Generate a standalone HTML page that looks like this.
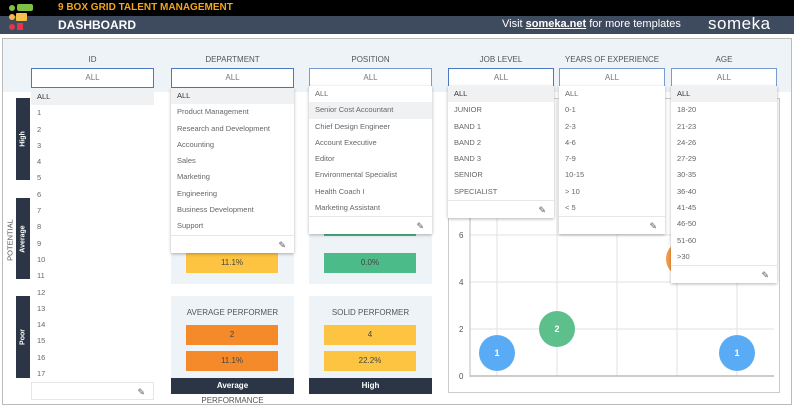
<!DOCTYPE html>
<html><head><meta charset="utf-8">
<style>
*{box-sizing:border-box;margin:0;padding:0}
body{width:794px;height:407px;overflow:hidden;background:#fff;font-family:"Liberation Sans",sans-serif;position:relative;color:#555}
.a{position:absolute}
.lbl{position:absolute;font-size:8px;color:#555;text-align:center;top:55px}
.inp{position:absolute;top:68px;height:20px;border:1.5px solid #4a78c2;background:#fff;font-size:8px;color:#777;text-align:center;line-height:17px}
.list{position:absolute;background:#fff;box-shadow:0 1px 3px rgba(0,0,0,.3);font-size:7.5px;color:#666}
.list div.r{height:16.3px;line-height:16.3px;padding-left:6px;white-space:nowrap}
.list div.r.h{background:#eff1f3;color:#333}
.list .ft{height:18px;border-top:1px solid #e6e6e6;position:relative}
.pen{position:absolute;right:8px;top:4px;font-size:9px;color:#555}
.side{position:absolute;left:16px;width:14px;background:#2c3545;color:#fff;font-size:7px;font-weight:bold}
.side span{position:absolute;left:50%;top:50%;transform:translate(-50%,-50%) rotate(-90deg);white-space:nowrap}
.bx{position:absolute;background:#eef3f7}
.bar{position:absolute;height:20px;font-size:8px;text-align:center;line-height:20px;color:#444}
.dk{position:absolute;background:#2c3545;color:#fff;font-size:8px;font-weight:bold;text-align:center;height:16px;line-height:16px}
</style></head><body>
<div class="a" style="left:0;top:0;width:794px;height:16px;background:#000"></div>
<div class="a" style="left:0;top:16px;width:794px;height:18px;background:#3e4b5e"></div>
<!-- logo -->
<div class="a" style="left:9px;top:5px;width:6px;height:6px;border-radius:50%;background:#7dc242"></div>
<div class="a" style="left:17px;top:4px;width:16px;height:7px;border-radius:2px;background:#7dc242"></div>
<div class="a" style="left:9px;top:14px;width:6px;height:6px;border-radius:50%;background:#f5b94c"></div>
<div class="a" style="left:16px;top:13px;width:11px;height:8px;border-radius:1px;background:#f5c14c"></div>
<div class="a" style="left:9px;top:24px;width:6px;height:6px;border-radius:50%;background:#e8334a"></div>
<div class="a" style="left:17px;top:23px;width:6px;height:7px;background:#e8334a"></div>
<div class="a" style="left:58px;top:2px;font-size:10px;font-weight:bold;color:#f3a51b">9 BOX GRID TALENT MANAGEMENT</div>
<div class="a" style="left:58px;top:18px;font-size:12px;font-weight:bold;color:#fff">DASHBOARD</div>
<div class="a" style="left:502px;top:18px;font-size:11px;color:#fff">Visit <b style="text-decoration:underline">someka.net</b> for more templates</div>
<div class="a" style="left:708px;top:14px;font-size:17px;color:#fff;letter-spacing:.5px">someka</div>
<!-- main panel -->
<div class="a" style="left:2px;top:38px;width:790px;height:367px;border:1px solid #bbb"></div>
<div class="a" style="left:3px;top:39px;width:788px;height:53px;background:#eef3f7"></div>
<div class="lbl" style="left:31px;width:123px">ID</div>
<div class="lbl" style="left:171px;width:123px">DEPARTMENT</div>
<div class="lbl" style="left:309px;width:123px">POSITION</div>
<div class="lbl" style="left:448px;width:106px">JOB LEVEL</div>
<div class="lbl" style="left:559px;width:106px">YEARS OF EXPERIENCE</div>
<div class="lbl" style="left:671px;width:106px">AGE</div>

<!-- potential side bars -->
<div class="a" style="left:4px;top:215px;width:12px;height:50px;font-size:7.5px;color:#555"><span style="position:absolute;left:50%;top:50%;transform:translate(-50%,-50%) rotate(-90deg)">POTENTIAL</span></div>
<div class="side" style="top:98px;height:82px"><span>High</span></div>
<div class="side" style="top:198px;height:81px"><span>Average</span></div>
<div class="side" style="top:296px;height:82px"><span>Poor</span></div>

<!-- boxes -->
<div class="bx" style="left:171px;top:230px;width:123px;height:54px"></div>
<div class="bx" style="left:309px;top:220px;width:123px;height:64px"></div>
<div class="bar" style="left:186px;top:253px;width:92px;background:#fdc441">11.1%</div>
<div class="bar" style="left:324px;top:225px;width:92px;height:11px;background:#4cbb8a"></div>
<div class="bar" style="left:324px;top:253px;width:92px;background:#4cbb8a">0.0%</div>
<div class="bx" style="left:171px;top:296px;width:123px;height:82px"></div>
<div class="bx" style="left:309px;top:296px;width:123px;height:82px"></div>
<div class="a" style="left:171px;top:308px;width:123px;text-align:center;font-size:8px;color:#555">AVERAGE PERFORMER</div>
<div class="a" style="left:309px;top:308px;width:123px;text-align:center;font-size:8px;color:#555">SOLID PERFORMER</div>
<div class="bar" style="left:186px;top:325px;width:92px;background:#f48a2a">2</div>
<div class="bar" style="left:186px;top:351px;width:92px;background:#f48a2a">11.1%</div>
<div class="bar" style="left:324px;top:325px;width:92px;background:#fdc441">4</div>
<div class="bar" style="left:324px;top:351px;width:92px;background:#fdc441">22.2%</div>
<div class="dk" style="left:171px;top:378px;width:123px">Average</div>
<div class="dk" style="left:309px;top:378px;width:123px">High</div>
<div class="a" style="left:171px;top:396px;width:123px;text-align:center;font-size:8px;color:#555">PERFORMANCE</div>

<!-- chart -->
<div class="a" style="left:448px;top:98px;width:332px;height:295px;border:1px solid #ccc;background:#fff"></div>
<svg class="a" style="left:448px;top:98px" width="332" height="295">
<g stroke="#e2e2e2" stroke-width="1">
<line x1="22" y1="137" x2="326" y2="137"/><line x1="22" y1="184" x2="326" y2="184"/><line x1="22" y1="231" x2="326" y2="231"/>
<line x1="49" y1="0" x2="49" y2="278"/><line x1="109" y1="0" x2="109" y2="278"/><line x1="169" y1="0" x2="169" y2="278"/><line x1="229" y1="0" x2="229" y2="278"/><line x1="289" y1="0" x2="289" y2="278"/>
</g>
<line x1="22" y1="0" x2="22" y2="279" stroke="#bbb"/>
<line x1="22" y1="278" x2="326" y2="278" stroke="#bbb" stroke-width="1.5"/>
<g font-size="8" fill="#555" font-family="Liberation Sans"><text x="11" y="140">6</text><text x="11" y="187">4</text><text x="11" y="234">2</text><text x="11" y="281">0</text></g>
<circle cx="236" cy="161" r="18" fill="#f39a45"/>
<circle cx="49" cy="255" r="18" fill="#5aabf5"/>
<circle cx="109" cy="231" r="18" fill="#5cbf8c"/>
<circle cx="289" cy="255" r="18" fill="#5aabf5"/>
<g font-size="9" font-weight="bold" fill="#fff" text-anchor="middle" font-family="Liberation Sans"><text x="49" y="258">1</text><text x="109" y="234">2</text><text x="289" y="258">1</text></g>
</svg>

<!-- inputs -->
<div class="inp" style="left:31px;width:123px">ALL</div>
<div class="inp" style="left:171px;width:123px">ALL</div>
<div class="inp" style="left:309px;width:123px;border-color:#7a9bd2">ALL</div>
<div class="inp" style="left:448px;width:106px">ALL</div>
<div class="inp" style="left:559px;width:106px;border-color:#7a9bd2">ALL</div>
<div class="inp" style="left:671px;width:106px;border-color:#7a9bd2">ALL</div>

<!-- lists -->
<div class="list" style="left:31px;top:89px;width:123px;box-shadow:none">
<div class="r h">ALL</div><div class="r">1</div><div class="r">2</div><div class="r">3</div><div class="r">4</div><div class="r">5</div><div class="r">6</div><div class="r">7</div><div class="r">8</div><div class="r">9</div><div class="r">10</div><div class="r">11</div><div class="r">12</div><div class="r">13</div><div class="r">14</div><div class="r">15</div><div class="r">16</div><div class="r">17</div>
<div class="ft" style="height:18px;border:1px solid #e6e6e6"><span class="pen">&#9998;</span></div></div>

<div class="list" style="left:171px;top:88px;width:123px">
<div class="r h">ALL</div><div class="r">Product Management</div><div class="r">Research and Development</div><div class="r">Accounting</div><div class="r">Sales</div><div class="r">Marketing</div><div class="r">Engineering</div><div class="r">Business Development</div><div class="r">Support</div>
<div class="ft"><span class="pen">&#9998;</span></div></div>

<div class="list" style="left:309px;top:86px;width:123px">
<div class="r">ALL</div><div class="r h" style="color:#666">Senior Cost Accountant</div><div class="r">Chief Design Engineer</div><div class="r">Account Executive</div><div class="r">Editor</div><div class="r">Environmental Specialist</div><div class="r">Health Coach I</div><div class="r">Marketing Assistant</div>
<div class="ft"><span class="pen">&#9998;</span></div></div>

<div class="list" style="left:448px;top:86px;width:106px">
<div class="r h">ALL</div><div class="r">JUNIOR</div><div class="r">BAND 1</div><div class="r">BAND 2</div><div class="r">BAND 3</div><div class="r">SENIOR</div><div class="r">SPECIALIST</div>
<div class="ft"><span class="pen">&#9998;</span></div></div>

<div class="list" style="left:559px;top:86px;width:106px">
<div class="r">ALL</div><div class="r">0-1</div><div class="r">2-3</div><div class="r">4-6</div><div class="r">7-9</div><div class="r">10-15</div><div class="r">&gt; 10</div><div class="r">&lt; 5</div>
<div class="ft"><span class="pen">&#9998;</span></div></div>

<div class="list" style="left:671px;top:86px;width:106px">
<div class="r h">ALL</div><div class="r">18-20</div><div class="r">21-23</div><div class="r">24-26</div><div class="r">27-29</div><div class="r">30-35</div><div class="r">36-40</div><div class="r">41-45</div><div class="r">46-50</div><div class="r">51-60</div><div class="r">&gt;30</div>
<div class="ft"><span class="pen">&#9998;</span></div></div>
</body></html>
